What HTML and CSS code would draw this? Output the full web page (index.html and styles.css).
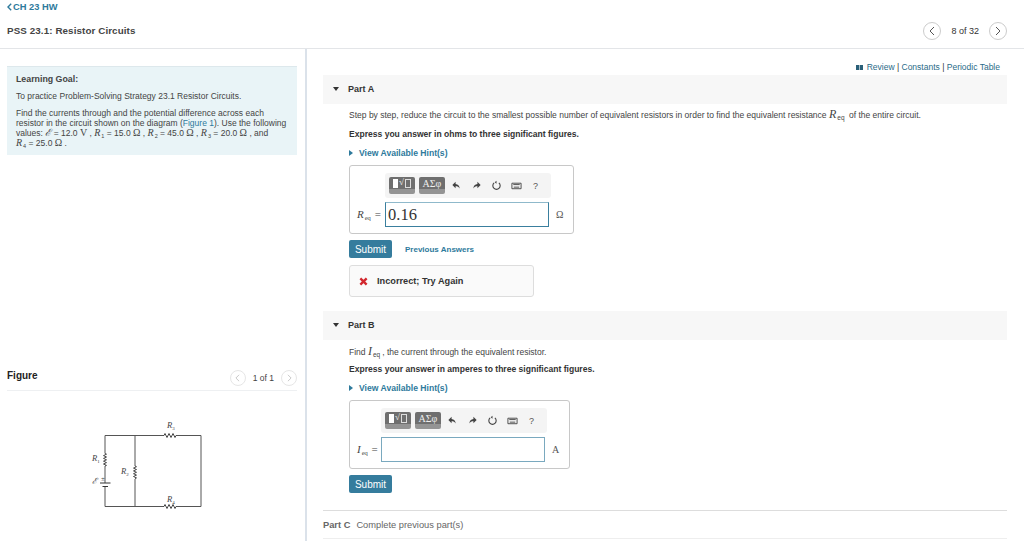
FILE: index.html
```html
<!DOCTYPE html>
<html lang="en">
<head>
<meta charset="utf-8">
<title>PSS 23.1: Resistor Circuits</title>
<link rel="stylesheet" href="styles.css">
</head>
<body>
<header class="top">
  <div class="top-text">
    <a class="back"><svg class="back-icon" viewBox="0 0 5 8"><path d="M4.2 .8 1 4l3.200 3.200" fill="none" stroke="#2e7a9c" stroke-width="1.400"/></svg>CH 23 HW</a>
    <h1 class="title">PSS 23.1: Resistor Circuits</h1>
  </div>
  <div class="pager">
    <span class="circle"><svg viewBox="0 0 6 10" class="chev"><path d="M5 1 1 5l4 4" fill="none" stroke="#555" stroke-width="1"/></svg></span>
    <span class="pager-text">8 of 32</span>
    <span class="circle"><svg viewBox="0 0 6 10" class="chev"><path d="M1 1l4 4-4 4" fill="none" stroke="#555" stroke-width="1"/></svg></span>
  </div>
</header>
<main class="main">
  <section class="left">
    <div class="goal">
      <p class="goal-head">Learning Goal:</p>
      <p class="goal-p">To practice Problem-Solving Strategy 23.1 Resistor Circuits.</p>
      <p class="goal-q">Find the currents through and the potential difference across each resistor in the circuit shown on the diagram (<a class="link">Figure 1</a>). Use the following values: <i class="m">ℰ</i> = 12.0 <span class="m">V</span> , <i class="m">R</i><sub>1</sub> = 15.0 <span class="m">Ω</span> , <i class="m">R</i><sub>2</sub> = 45.0 <span class="m">Ω</span> , <i class="m">R</i><sub>3</sub> = 20.0 <span class="m">Ω</span> , and <span class="nowrap"><i class="m">R</i><sub>4</sub> = 25.0 <span class="m">Ω</span> .</span></p>
    </div>
    <div class="fig-head">
      <strong class="fig-title">Figure</strong>
      <div class="fig-pager">
        <span class="circle small"><svg viewBox="0 0 6 10" class="chev small-chev"><path d="M5 1 1 5l4 4" fill="none" stroke="#bbb" stroke-width="1"/></svg></span>
        <span class="fig-count">1 of 1</span>
        <span class="circle small"><svg viewBox="0 0 6 10" class="chev small-chev"><path d="M1 1l4 4-4 4" fill="none" stroke="#bbb" stroke-width="1"/></svg></span>
      </div>
    </div>
    <svg class="circuit" viewBox="0 0 120 100" width="120" height="100">
      <g fill="none" stroke="#555" stroke-width="1">
        <path d="M25 22.500V4.500H84M96 4.500H121V75.500H96M84 75.500H25V55.500"/>
        <path d="M25 35V52"/>
        <path d="M25 22.500l1.500.7-3 1.400 3 1.400-3 1.400 3 1.400-3 1.400 3 1.400-3 1.400 3 1.400-1.500.6" stroke="#333" stroke-width=".9"/>
        <path d="M55 4.500V35M55 48V75.500"/>
        <path d="M55 35l1.500.7-3 1.400 3 1.400-3 1.400 3 1.400-3 1.400 3 1.400-3 1.400 3 1.400-1.500.7" stroke="#333" stroke-width=".9"/>
        <path d="M84 4.500l1-2 2 4 2-4 2 4 2-4 2 4 1-2" stroke="#333" stroke-width=".9"/>
        <path d="M84 75.500l1-2 2 4 2-4 2 4 2-4 2 4 1-2" stroke="#333" stroke-width=".9"/>
        <path d="M20 52H30.500M22.500 55.500H28" stroke="#333"/>
      </g>
      <g class="circuit-label">
        <text x="87" y="-3"><tspan font-style="italic">R</tspan><tspan font-size="5" dy="1.500">3</tspan></text>
        <text x="12" y="30"><tspan font-style="italic">R</tspan><tspan font-size="5" dy="1.500">1</tspan></text>
        <text x="41" y="43"><tspan font-style="italic">R</tspan><tspan font-size="5" dy="1.500">2</tspan></text>
        <text x="87" y="71"><tspan font-style="italic">R</tspan><tspan font-size="5" dy="1.500">4</tspan></text>
        <text x="12" y="53" font-style="italic">ℰ</text>
        <text x="21" y="50" font-size="7">±</text>
      </g>
    </svg>
  </section>
  <section class="right">
    <div class="links"><svg class="book" viewBox="0 0 7 5"><path d="M0 0h3.200v5H0zM3.800 0H7v5H3.800z" fill="#2a5f78"/></svg><a class="rlink">Review</a> <span class="sep">|</span> <a class="rlink">Constants</a> <span class="sep">|</span> <a class="rlink">Periodic Table</a></div>

    <div class="part-bar"><span class="tri"></span><strong>Part A</strong></div>
    <div class="part-body">
      <p class="prompt">Step by step, reduce the circuit to the smallest possible number of equivalent resistors in order to find the equivalent resistance <i class="m big">R</i><sub class="eq">eq</sub> of the entire circuit.</p>
      <p class="express">Express you answer in ohms to three significant figures.</p>
      <a class="hint"><span class="hint-tri"></span>View Available Hint(s)</a>
      <div class="answer">
        <div class="toolbar">
          <span class="tbtn"><span class="tb-white"></span><span class="tb-radical">√</span><span class="tb-box"></span></span>
          <span class="tbtn greek">ΑΣφ</span>
          <svg class="tool" viewBox="0 0 12 12"><path d="M5 2 1.500 5.500 5 9V6.800c2 0 3.500.6 4.500 2.400C9.300 6.200 7.500 4.600 5 4.300z" fill="#444"/></svg>
          <svg class="tool" viewBox="0 0 12 12"><path d="M7 2l3.500 3.500L7 9V6.800C5 6.800 3.500 7.400 2.500 9.200 2.700 6.200 4.500 4.600 7 4.300z" fill="#444"/></svg>
          <svg class="tool" viewBox="0 0 12 12"><path d="M8.600 3.200A4 4 0 1 1 3.400 3.200" fill="none" stroke="#444" stroke-width="1.200"/><path d="M6 .8v3.400L4 2.500z" fill="#444"/></svg>
          <svg class="tool" viewBox="0 0 12 12"><path d="M1 3.500h10v6H1z" fill="none" stroke="#444"/><path d="M2.500 5h7M3 7.800h6" stroke="#444"/></svg>
          <span class="tool-q">?</span>
        </div>
        <div class="answer-row">
          <span class="var"><i>R</i><sub>eq</sub> =</span>
          <span class="input">0.16</span>
          <span class="unit">Ω</span>
        </div>
      </div>
      <div class="actions">
        <button class="submit">Submit</button>
        <a class="prev">Previous Answers</a>
      </div>
      <div class="feedback"><svg class="x" viewBox="0 0 10 10"><path d="M1.500 1.500l7 7M8.500 1.500l-7 7" stroke="#d2282e" stroke-width="2.600"/></svg><span>Incorrect; Try Again</span></div>
    </div>

    <div class="part-bar part-b"><span class="tri"></span><strong>Part B</strong></div>
    <div class="part-body">
      <p class="prompt b-prompt">Find <i class="m big">I</i><sub class="eq">eq</sub>, the current through the equivalent resistor.</p>
      <p class="express b-express">Express your answer in amperes to three significant figures.</p>
      <a class="hint"><span class="hint-tri"></span>View Available Hint(s)</a>
      <div class="answer answer-b">
        <div class="toolbar">
          <span class="tbtn"><span class="tb-white"></span><span class="tb-radical">√</span><span class="tb-box"></span></span>
          <span class="tbtn greek">ΑΣφ</span>
          <svg class="tool" viewBox="0 0 12 12"><path d="M5 2 1.500 5.500 5 9V6.800c2 0 3.500.6 4.500 2.400C9.300 6.200 7.500 4.600 5 4.300z" fill="#444"/></svg>
          <svg class="tool" viewBox="0 0 12 12"><path d="M7 2l3.500 3.500L7 9V6.800C5 6.800 3.500 7.400 2.500 9.200 2.700 6.200 4.500 4.600 7 4.300z" fill="#444"/></svg>
          <svg class="tool" viewBox="0 0 12 12"><path d="M8.600 3.200A4 4 0 1 1 3.400 3.200" fill="none" stroke="#444" stroke-width="1.200"/><path d="M6 .8v3.400L4 2.500z" fill="#444"/></svg>
          <svg class="tool" viewBox="0 0 12 12"><path d="M1 3.500h10v6H1z" fill="none" stroke="#444"/><path d="M2.500 5h7M3 7.800h6" stroke="#444"/></svg>
          <span class="tool-q">?</span>
        </div>
        <div class="answer-row">
          <span class="var"><i>I</i><sub>eq</sub> =</span>
          <span class="input empty"></span>
          <span class="unit">A</span>
        </div>
      </div>
      <div class="actions actions-b"><button class="submit">Submit</button></div>
    </div>

    <div class="part-c"><strong>Part C</strong><span>Complete previous part(s)</span></div>
  </section>
</main>
</body>
</html>
```
FILE: styles.css
```css
* { box-sizing: border-box; }
html, body { margin: 0; padding: 0; height: 541px; overflow: hidden; }
body { background: #fff; color: #333; font-family: "Liberation Sans", Arial, sans-serif; font-size: 8.500px; }
p { margin: 0; }
.nowrap { white-space: nowrap; }
.top { height: 49px; border-bottom: 1px solid #e3e5e8; display: flex; justify-content: space-between; padding: 0 17px 0 7px; }
.top-text { display: flex; flex-direction: column; }
.back { color: #2e7a9c; font-weight: bold; font-size: 9.300px; line-height: 12px; margin-top: 1px; display: flex; align-items: center; }
.back-icon { width: 5px; height: 8px; margin-right: 1px; }
.title { margin: 12px 0 0; font-size: 9.800px; line-height: 12px; font-weight: bold; color: #444; letter-spacing: .1px; }
.pager { display: flex; align-items: center; gap: 10px; margin-top: 22px; height: 18px; }
.pager-text { font-size: 9px; color: #333; }
.circle { width: 18px; height: 18px; border-radius: 50%; border: 1px solid #ccc; display: flex; align-items: center; justify-content: center; background: #fff; }
.chev { width: 6px; height: 10px; }
.circle.small { width: 16px; height: 16px; border-color: #e6e6e6; }
.small-chev { width: 5px; height: 8px; }
.main { display: flex; height: 492px; }
.left { width: 307px; border-right: 2px solid #dbe2ea; padding: 17px 8px 0 7px; flex: none; }
.goal { background: #e9f4f7; border-top: 1px solid #dde8ec; height: 89px; padding: 7px 9px 0 9px; }
.goal-head { font-weight: bold; font-size: 8.800px; line-height: 11px; color: #444; }
.goal-p { margin-top: 6px; line-height: 11px; color: #444; }
.goal-q { margin-top: 6px; line-height: 10px; color: #444; }
.link { color: #2e7a9c; }
.m { font-family: "Liberation Serif", serif; font-size: 10px; }
sub { font-size: 5.500px; line-height: 0; margin-left: 1px; vertical-align: -1.500px; }
.fig-head { display: flex; justify-content: space-between; align-items: center; margin-top: 212px; height: 24px; border-bottom: 1px solid #eef0f2; padding-bottom: 6px; }
.fig-title { font-size: 10px; color: #222; }
.fig-pager { display: flex; align-items: center; gap: 7px; padding-top: 4px; }
.fig-count { font-size: 8.500px; color: #444; }
.circuit { display: block; overflow: visible; margin: 40px 0 0 73px; }
.circuit-label { font-family: "Liberation Serif", serif; font-size: 8.500px; fill: #444; }
.right { flex: 1; padding: 12px 17px 0 16px; min-width: 0; }
.links { text-align: right; padding-right: 7px; font-size: 8.500px; line-height: 13px; height: 14px; color: #333; }
.book { width: 7px; height: 5px; margin-right: 4px; }
.rlink { color: #2a6b88; }
.part-bar { background: #f7f7f7; height: 29px; display: flex; align-items: center; padding: 0 0 2px 10px; font-size: 9px; color: #333; }
.part-bar strong { margin-left: 9px; }
.tri { width: 0; height: 0; border-left: 3.500px solid transparent; border-right: 3.500px solid transparent; border-top: 4px solid #333; }
.part-body { padding-left: 26px; }
.prompt { margin-top: 4px; line-height: 12px; font-size: 8.530px; color: #444; }
.m.big { font-size: 12px; }
.eq { font-size: 6.500px; margin-right: 2px; }
.express { margin-top: 7px; line-height: 12px; font-weight: bold; font-size: 8.550px; color: #333; }
.b-express { margin-top: 5px; }
.hint { display: flex; align-items: center; margin-top: 7px; line-height: 12px; font-size: 8.600px; color: #2e7a9c; font-weight: bold; }
.hint-tri { width: 0; height: 0; border-top: 3.500px solid transparent; border-bottom: 3.500px solid transparent; border-left: 4px solid #2e7a9c; margin-right: 6px; }
.answer { width: 225px; height: 69px; border: 1px solid #c8c8c8; border-radius: 3px; margin-top: 6px; padding-top: 7px; }
.answer-b { width: 221px; }
.toolbar { display: flex; align-items: center; width: 166px; height: 25px; margin-left: 35px; background: #f4f4f4; border-radius: 3px; padding-left: 4px; }
.answer-b .toolbar { margin-left: 31px; }
.tbtn { width: 26px; height: 17px; background: linear-gradient(#6f6f6f 0 72%, #949494 72% 100%); border-radius: 2px; margin-right: 4px; color: #eee; display: flex; align-items: center; justify-content: center; gap: 1px; font-family: "Liberation Serif", serif; font-size: 10px; padding-bottom: 4px; }
.greek { margin-right: 6px; }
.tb-white { width: 5px; height: 9px; background: #fff; }
.tb-radical { font-size: 9px; line-height: 9px; margin-top: -3px; }
.tb-box { width: 6px; height: 9px; border: 1px solid #ddd; }
.tool { width: 11px; height: 11px; margin-right: 9px; }
.tool-q { font-size: 9px; color: #555; margin-left: 2px; }
.answer-row { display: flex; align-items: center; margin-top: 3px; padding-left: 7px; height: 26px; }
.var { width: 28px; font-family: "Liberation Serif", serif; font-size: 11px; color: #444; white-space: nowrap; }
.answer-b .var { width: 24px; }
.var sub { font-size: 6.500px; margin-right: 1px; }
.input { width: 164px; height: 25px; border: 1px solid #3a7f9e; border-top-color: #8fb9cb; font-family: "Liberation Serif", serif; font-size: 16.500px; color: #333; padding-left: 2px; line-height: 23px; }
.input.empty { border-color: #7aa9bf; }
.unit { font-family: "Liberation Serif", serif; font-size: 10px; margin-left: 7px; color: #555; }
.actions { display: flex; align-items: center; margin-top: 6px; gap: 13px; }
.actions-b { margin-top: 6px; }
.submit { width: 43px; height: 18px; padding: 0; background: #357c9d; color: #fff; border: 0; border-radius: 2px; font: 10px "Liberation Sans", Arial, sans-serif; }
.prev { color: #2e7a9c; font-weight: bold; font-size: 8px; }
.feedback { width: 185px; height: 32px; border: 1px solid #ddd; border-radius: 3px; margin-top: 7px; background: #fafafa; display: flex; align-items: center; padding-left: 9px; font-weight: bold; font-size: 9.200px; color: #333; }
.x { width: 9px; height: 9px; margin-right: 9px; }
.part-b { margin-top: 14px; }
.b-prompt { margin-top: 5px; }
.part-c { margin-top: 17px; border-top: 1px solid #ddd; height: 29px; display: flex; align-items: center; gap: 6px; color: #666; font-size: 9.300px; border-bottom: 1px solid #eee; }
```
